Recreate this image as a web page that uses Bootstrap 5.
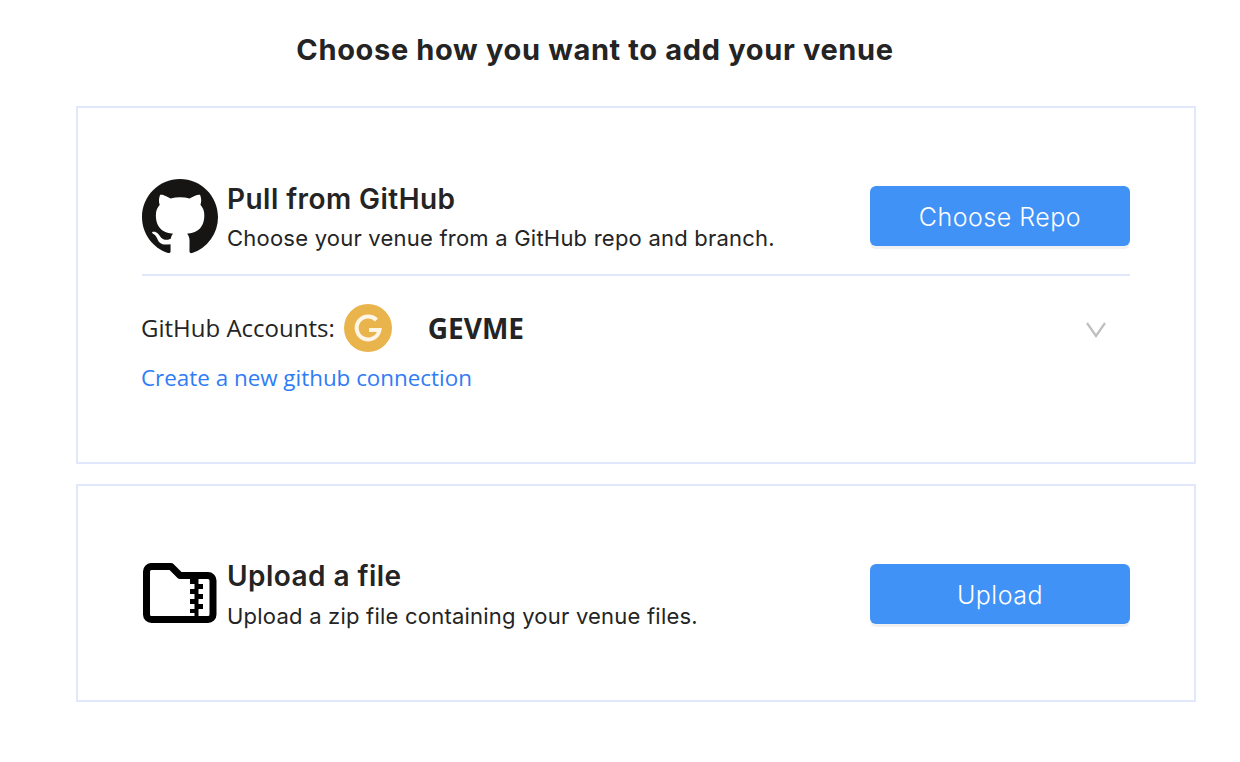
<!DOCTYPE html>
<html lang="en">
<head>
  <meta charset="UTF-8" />
  <meta name="viewport" content="width=device-width, initial-scale=1" />
  <title>Choose how you want to add your venue</title>
  <link href="https://cdn.jsdelivr.net/npm/bootstrap@5.3.0/dist/css/bootstrap.min.css" rel="stylesheet" />
  <style>
    body { background: #fff; color: #242424; font-family: Inter, sans-serif; }
    .page-wrap { padding: 30px 44px 0 76px; }
    .page-title { font-family: Inter, sans-serif; font-weight: 700; font-size: 29px; letter-spacing: .65px; line-height: 40px; margin: 0 0 36px; padding-right: 82px; text-align: center; color: #242424; }
    .add-panel { border: 2px solid #e1e8fb; padding: 71px 64px 0; }
    .panel-github { height: 358px; margin-bottom: 20px; }
    .panel-github .add-btn { margin-bottom: 2px; }
    .panel-upload { height: 218px; padding-top: 70px; }
    .panel-upload .opt-copy { padding-top: 1px; }
    .panel-upload .opt-title { margin-bottom: 6px; }
    .panel-upload svg { margin-bottom: 3px; }
    .icon-slot { width: 76px; flex: none; margin-right: 9px; }
    .head-row { height: 76px; }
    .opt-title { font-size: 28px; font-weight: 600; line-height: 36px; margin: 0 0 5px; padding-top: 1px; letter-spacing: .45px; }
    .opt-text { font-size: 22px; line-height: 32px; margin: 0; letter-spacing: .22px; }
    .add-btn { width: 260px; height: 60px; padding-top: 9px; border-radius: 6px; background: #4192f7; border: 0; color: #fff; font-size: 25px; font-weight: 300; letter-spacing: .5px; box-shadow: 0 3px 0 #f1f1f1; }
    .add-btn:hover { background: #3584e8; color: #fff; }
    .split-line { border-top: 2px solid #e1e8fb; margin-top: 19px; }
    .account-row { font-family: "Open Sans", sans-serif; font-size: 24px; height: 48px; margin-top: 28px; margin-left: -1px; }
    .account-name { font-weight: 700; font-size: 28px; margin-left: 36px; }
    .account-logo { width: 48px; height: 48px; margin-left: 9px; }
    .caret-btn { margin-right: 24px; margin-top: 4px; }
    .new-conn { display: block; font-family: "Open Sans", sans-serif; font-size: 22.4px; line-height: 30px; margin-top: 11px; margin-left: -1px; color: #2f7cf6; text-decoration: none; }
  </style>
</head>
<body>
  <div class="page-wrap">
    <h1 class="page-title">Choose how you want to add your venue</h1>

    <div class="add-panel panel-github">
      <div class="d-flex align-items-center head-row">
        <div class="icon-slot">
          <svg class="d-block" width="76" height="76" viewBox="0 0 16 16" fill="#161514"><path d="M8 0C3.58 0 0 3.58 0 8c0 3.54 2.29 6.53 5.47 7.59.4.07.55-.17.55-.38 0-.19-.01-.82-.01-1.49-2.01.37-2.53-.49-2.69-.94-.09-.23-.48-.94-.82-1.13-.28-.15-.68-.52-.01-.53.63-.01 1.08.58 1.23.82.72 1.21 1.87.87 2.33.66.07-.52.28-.87.51-1.07-1.78-.2-3.64-.89-3.64-3.95 0-.87.31-1.59.82-2.15-.08-.2-.36-1.02.08-2.12 0 0 .67-.21 2.2.82.64-.18 1.32-.27 2-.27s1.36.09 2 .27c1.53-1.04 2.2-.82 2.2-.82.44 1.1.16 1.92.08 2.12.51.56.82 1.27.82 2.15 0 3.07-1.87 3.75-3.65 3.95.29.25.54.73.54 1.48 0 1.07-.01 1.93-.01 2.2 0 .21.15.46.55.38A8.01 8.01 0 0 0 16 8c0-4.42-3.58-8-8-8z"/></svg>
        </div>
        <div class="flex-grow-1 opt-copy">
          <h2 class="opt-title">Pull from GitHub</h2>
          <p class="opt-text">Choose your venue from a GitHub repo and branch.</p>
        </div>
        <button type="button" class="btn add-btn">Choose Repo</button>
      </div>
      <div class="split-line"></div>
      <div class="d-flex align-items-center account-row">
        <span>GitHub Accounts:</span>
        <svg class="account-logo" viewBox="0 0 48 48">
          <circle cx="24" cy="24" r="24" fill="#e9b44c"/>
          <path d="M32.5 16A11.5 11.5 0 1 0 35.5 26H25" fill="none" stroke="#fdf6e8" stroke-width="4"/>
        </svg>
        <span class="account-name flex-grow-1">GEVME</span>
        <svg class="caret-btn" width="20" height="16" viewBox="0 0 20 16"><path d="M1 1l9 13 9-13" fill="none" stroke="#bfbfbf" stroke-width="2.2"/></svg>
      </div>
      <a href="#" class="new-conn">Create a new github connection</a>
    </div>

    <div class="add-panel panel-upload">
      <div class="d-flex align-items-center head-row">
        <div class="icon-slot">
          <svg class="d-block" width="76" height="60" viewBox="0 0 76 60">
            <path d="M9 3.5h20l9 9h28a5 5 0 0 1 5 5v34a5 5 0 0 1-5 5H9.500a5 5 0 0 1-5-5V8.500a5 5 0 0 1 5-5z" fill="#fff" stroke="#000" stroke-width="7" stroke-linejoin="round"/>
            <path d="M52.500 12h4v41h-4zM48 16h5v5h-5zM56 21h5v5h-5zM48 26h5v5h-5zM56 31h5v5h-5zM48 36h5v5h-5zM56 41h5v5h-5zM48 46h5v4h-5z" fill="#000"/>
          </svg>
        </div>
        <div class="flex-grow-1 opt-copy">
          <h2 class="opt-title">Upload a file</h2>
          <p class="opt-text">Upload a zip file containing your venue files.</p>
        </div>
        <button type="button" class="btn add-btn">Upload</button>
      </div>
    </div>
  </div>

  <script src="https://cdn.jsdelivr.net/npm/bootstrap@5.3.0/dist/js/bootstrap.bundle.min.js"></script>
</body>
</html>
